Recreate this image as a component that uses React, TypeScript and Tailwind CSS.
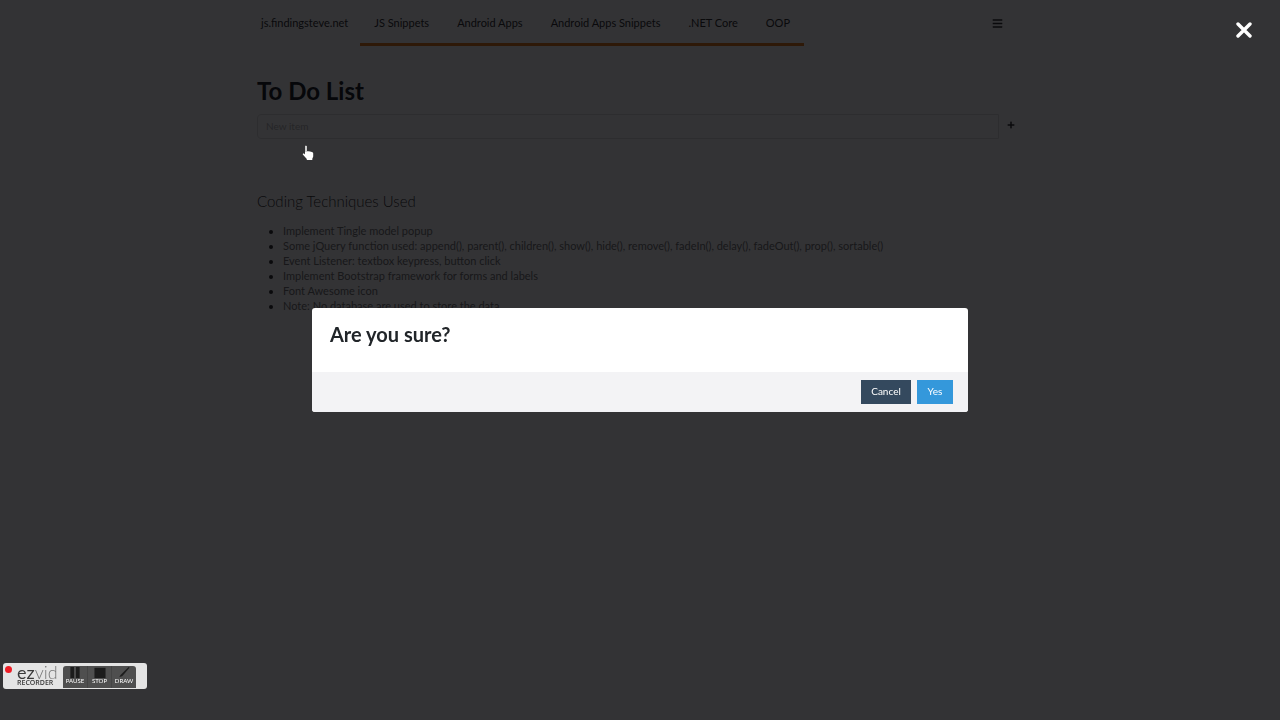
import { useState } from 'react'
import { FaBars, FaPlus } from 'react-icons/fa'

const navLinks = ['JS Snippets', 'Android Apps', 'Android Apps Snippets', '.NET Core', 'OOP']

const techniques = [
  'Implement Tingle model popup',
  'Some jQuery function used: append(), parent(), children(), show(), hide(), remove(), fadeIn(), delay(), fadeOut(), prop(), sortable()',
  'Event Listener: textbox keypress, button click',
  'Implement Bootstrap framework for forms and labels',
  'Font Awesome icon',
  'Note: No database are used to store the data',
]

function NavBar() {
  return (
    <nav className="flex items-start text-[11px] leading-[14px] text-[#333333]">
      <a href="#" className="mx-1 pt-4">js.findingsteve.net</a>
      <div className="ml-2 flex border-b-3 border-[#e67e22] pt-4 pb-[13px]">
        {navLinks.map(label => (
          <a key={label} href="#" className="px-[14px]">{label}</a>
        ))}
      </div>
      <button type="button" aria-label="Menu" className="mt-4 mr-5 ml-auto flex h-[14px] items-center">
        <FaBars size={11} />
      </button>
    </nav>
  )
}

function TodoForm() {
  const [item, setItem] = useState('')

  return (
    <form className="mt-2 flex h-[25px] text-[10px]" onSubmit={e => e.preventDefault()}>
      <input
        type="text"
        aria-label="New item"
        placeholder="New item"
        value={item}
        onChange={e => setItem(e.target.value)}
        className="min-w-0 flex-1 rounded-l-sm border border-[#e2e2e2] px-2 placeholder:text-[#b8b8b8]"
      />
      <button type="submit" aria-label="Add item" className="flex w-6 items-center justify-center pb-1 text-[#333333]">
        <FaPlus size={8} />
      </button>
    </form>
  )
}

function ConfirmModal() {
  return (
    <div className="fixed inset-0 flex items-center justify-center bg-[#000003]/80">
      <button type="button" aria-label="Close" className="absolute top-[22px] right-[28px] text-white">
        <svg width="16" height="16" viewBox="0 0 16 16" fill="none" stroke="currentColor" strokeWidth="3.4" strokeLinecap="round">
          <path d="M2 2l12 12M14 2L2 14" />
        </svg>
      </button>
      <div role="dialog" aria-modal="true" aria-labelledby="confirm-title" className="w-full max-w-[656px] overflow-hidden rounded-[3px] bg-white">
        <div className="h-16 px-[18px] pt-[14px]">
          <h3 id="confirm-title" className="text-[20px] leading-6 font-bold text-[#212529]">Are you sure?</h3>
        </div>
        <div className="flex justify-end gap-[6px] bg-[#f3f3f5] px-[15px] py-2 text-[10px] text-white">
          <button type="button" className="h-6 w-[50px] bg-[#34495e] pb-px">Cancel</button>
          <button type="button" className="h-6 w-9 bg-[#3498db] pb-px">Yes</button>
        </div>
      </div>
    </div>
  )
}

function RecorderBar() {
  return (
    <div className="fixed bottom-[31px] left-[3px] flex h-[26px] w-36 rounded-[3px] bg-[#e4e4e4]">
      <span className="absolute top-[3px] left-[2px] size-[7px] rounded-full bg-[#ee1c25]" />
      <div className="w-[60px] pt-[2px] pl-[14px] text-[#3a3a3a]">
        <div className="text-[18px] leading-[14px]">
          ez<span className="font-light text-[#777777]">vid</span>
        </div>
        <div className="font-['Open_Sans',sans-serif] text-[7px] leading-[8px] font-semibold">RECORDER</div>
      </div>
      <div className="mt-[3px] mb-px flex rounded-t-[3px] bg-[#4f4f4f] text-[6px] leading-[6px] text-white">
        <button type="button" className="flex w-6 flex-col items-center justify-between pb-1">
          <svg width="12" height="12" viewBox="0 0 12 13" fill="#1c1c1c">
            <path d="M1 1h4v12H1zM7 1h4v12H7z" />
          </svg>
          PAUSE
        </button>
        <button type="button" className="flex w-[25px] flex-col items-center justify-between border-x border-[#444444] pb-1">
          <svg width="12" height="12" viewBox="0 0 12 13" fill="#1c1c1c">
            <path d="M0 2h12v11H0z" />
          </svg>
          STOP
        </button>
        <button type="button" className="flex w-6 flex-col items-center justify-between pb-1">
          <svg width="12" height="12" viewBox="0 0 12 13" fill="#1c1c1c">
            <path d="M11 1l1 1-8 9-3 1 1-2z" />
          </svg>
          DRAW
        </button>
      </div>
    </div>
  )
}

function HandCursor() {
  return (
    <svg className="pointer-events-none fixed top-[145px] left-[302px]" width="12" height="16" viewBox="0 0 12 16" aria-hidden="true">
      <path d="M3 1.5c0-1 1.8-1 1.8 0V6l5 1c.9.2 1.4.7 1.4 1.6v2.6c0 1-.7 1.8-.9 2.5v1.4H4.8v-1L1 9.8C.3 8.8 1.3 8 2 8.6l1 1z" fill="#ffffff" />
      <path d="M3 1.5c0-1 1.8-1 1.8 0V6l5 1H3z" fill="#cccccc" />
    </svg>
  )
}

export default function App() {
  return (
    <div className="min-h-screen bg-white font-['Lato','Open_Sans',sans-serif]">
      <main className="mx-auto max-w-3xl px-px">
        <NavBar />
        <h1 className="mt-[30px] text-[24px] leading-[30px] font-bold text-[#212529]">To Do List</h1>
        <TodoForm />
        <section className="mt-[53px] text-[#333333]">
          <h2 className="text-[15px] leading-[18px] font-light">Coding Techniques Used</h2>
          <ul className="mt-[13px] list-disc pl-[26px] text-[11px] leading-[15px] text-[#777777] marker:text-[#333333]">
            {techniques.map(text => (
              <li key={text}>{text}</li>
            ))}
          </ul>
        </section>
      </main>
      <ConfirmModal />
      <HandCursor />
      <RecorderBar />
    </div>
  )
}
